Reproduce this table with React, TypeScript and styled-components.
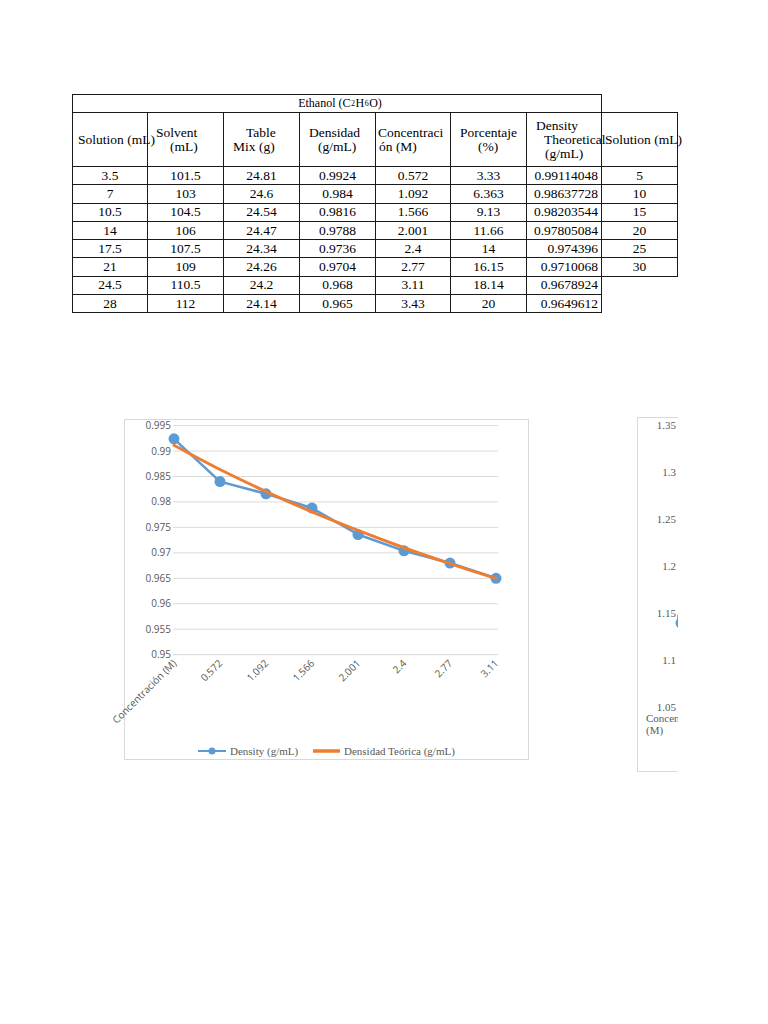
import * as React from 'react';
import styled, { createGlobalStyle } from 'styled-components';

const GlobalStyle = createGlobalStyle`
  body {
    margin: 0;
    background: #fff;
  }
`;

const line = '1px solid #1a1a1a';

const Page = styled.div`
  padding: 94px 0 40px 72px;
  font-family: 'Liberation Serif', 'Times New Roman', serif;
  color: #000;
`;

const Grid = styled.div`
  display: grid;
  grid-template-columns: 76px 76px 76px 76px 75px 76px 75px 76px;
  grid-template-rows: 19px 54px repeat(8, 18.25px);
  font-size: 13.5px;
`;

const Title = styled.div`
  grid-column: 1 / 8;
  grid-row: 1;
  box-sizing: border-box;
  border: ${line};
  display: flex;
  align-items: center;
  justify-content: center;
  font-size: 12px;
  padding-left: 6px;

  sub {
    font-size: 8px;
    vertical-align: -3px;
    line-height: 0;
    margin: 0 0.5px;
  }
`;

const Cell = styled.div<{ $col: number; $row: number; $align?: 'center' | 'right' }>`
  grid-column: ${p => p.$col};
  grid-row: ${p => p.$row};
  box-sizing: border-box;
  border-right: ${line};
  border-bottom: ${line};
  border-left: ${p => (p.$col === 1 ? line : 'none')};
  display: flex;
  align-items: center;
  justify-content: ${p => (p.$align === 'right' ? 'flex-end' : 'center')};
  padding-right: ${p => (p.$align === 'right' ? '3px' : '0')};
  line-height: 1;
  white-space: nowrap;
`;

const Head = styled.div<{ $col: number; $top?: boolean }>`
  grid-column: ${p => p.$col};
  grid-row: 2;
  box-sizing: border-box;
  border-right: ${line};
  border-bottom: ${line};
  border-left: ${p => (p.$col === 1 ? line : 'none')};
  border-top: ${p => (p.$top ? line : 'none')};
  margin-top: ${p => (p.$top ? '-1px' : '0')};
  display: flex;
  flex-direction: column;
  justify-content: center;
  overflow: visible;
  position: relative;
`;

const HeadLine = styled.span<{ $indent: number }>`
  display: block;
  padding-left: ${p => p.$indent}px;
  line-height: 14px;
  white-space: nowrap;
`;

const ChartsRow = styled.div`
  display: flex;
  align-items: flex-start;
  gap: 108px;
  margin-top: 104px;
  padding-left: 52px;
`;

const ChartBox = styled.div`
  width: 405px;
  height: 341px;
  margin-top: 2px;
  box-sizing: border-box;
  border: 1px solid #d9d9d9;
  background: #fff;

  svg {
    display: block;
    overflow: visible;
  }
`;

const Clip = styled.div`
  width: 41px;
  overflow: hidden;
`;

const SidePanel = styled.div`
  width: 200px;
  height: 355px;
  box-sizing: border-box;
  border: 1px solid #d9d9d9;

  svg {
    display: block;
  }
`;

const AxisText = styled.text`
  font-family: 'Open Sans', 'Liberation Sans', sans-serif;
  font-size: 10px;
  fill: #595959;
`;

const SerifText = styled.text`
  font-family: 'Liberation Serif', 'Times New Roman', serif;
  font-size: 11px;
  fill: #595959;
`;

const headers = [
  { col: 1, lines: [['Solution (mL)', 5]] },
  { col: 2, lines: [['Solvent', 8], ['(mL)', 22]] },
  { col: 3, lines: [['Table', 22], ['Mix (g)', 9]] },
  { col: 4, lines: [['Densidad', 9], ['(g/mL)', 18]] },
  { col: 5, lines: [['Concentraci', 2], ['ón (M)', 3]] },
  { col: 6, lines: [['Porcentaje', 9], ['(%)', 27]] },
  { col: 7, lines: [['Density', 9], ['Theoretical', 17], ['(g/mL)', 18]] },
  { col: 8, lines: [['Solution (mL)', 3]], top: true }
] as { col: number; lines: [string, number][]; top?: boolean }[];

const rows = [
  ['3.5', '101.5', '24.81', '0.9924', '0.572', '3.33', '0.99114048', '5'],
  ['7', '103', '24.6', '0.984', '1.092', '6.363', '0.98637728', '10'],
  ['10.5', '104.5', '24.54', '0.9816', '1.566', '9.13', '0.98203544', '15'],
  ['14', '106', '24.47', '0.9788', '2.001', '11.66', '0.97805084', '20'],
  ['17.5', '107.5', '24.34', '0.9736', '2.4', '14', '0.974396', '25'],
  ['21', '109', '24.26', '0.9704', '2.77', '16.15', '0.9710068', '30'],
  ['24.5', '110.5', '24.2', '0.968', '3.11', '18.14', '0.9678924'],
  ['28', '112', '24.14', '0.965', '3.43', '20', '0.9649612']
];

const density = [0.9924, 0.984, 0.9816, 0.9788, 0.9736, 0.9704, 0.968, 0.965];
const theory = [0.99114048, 0.98637728, 0.98203544, 0.97805084, 0.974396, 0.9710068, 0.9678924, 0.9649612];
const categories = ['Concentración (M)', '0.572', '1.092', '1.566', '2.001', '2.4', '2.77', '3.11'];
const ticks = ['0.995', '0.99', '0.985', '0.98', '0.975', '0.97', '0.965', '0.96', '0.955', '0.95'];

const xAt = (i: number) => 49 + i * 46;
const yAt = (v: number) => 5.6 + ((0.995 - v) / 0.005) * 25.45;

function smoothPath(pts: number[][]) {
  let d = `M${pts[0][0]},${pts[0][1]}`;
  for (let i = 0; i < pts.length - 1; i++) {
    const p0 = pts[i - 1] || pts[i];
    const p1 = pts[i];
    const p2 = pts[i + 1];
    const p3 = pts[i + 2] || p2;
    const c1x = p1[0] + (p2[0] - p0[0]) / 6;
    const c1y = p1[1] + (p2[1] - p0[1]) / 6;
    const c2x = p2[0] - (p3[0] - p1[0]) / 6;
    const c2y = p2[1] - (p3[1] - p1[1]) / 6;
    d += ` C${c1x},${c1y} ${c2x},${c2y} ${p2[0]},${p2[1]}`;
  }
  return d;
}

function DensityChart() {
  const bluePts = density.map((v, i) => [xAt(i), yAt(v)]);
  const orangePts = theory.map((v, i) => [xAt(i), yAt(v)]);

  return (
    <ChartBox>
      <svg width="403" height="339">
        {ticks.map((t, i) => {
          const y = 5.6 + i * 25.45;
          return (
            <g key={t}>
              <line x1="48" x2="373" y1={y} y2={y} stroke="#d9d9d9" strokeWidth="1" />
              <AxisText x="46" y={y + 3.5} textAnchor="end">
                {t}
              </AxisText>
            </g>
          );
        })}
        {categories.map((c, i) => (
          <AxisText
            key={c}
            x={xAt(i) + 3}
            y={244}
            textAnchor="end"
            transform={`rotate(-45 ${xAt(i) + 3} 244)`}
          >
            {c}
          </AxisText>
        ))}
        <polyline
          points={bluePts.map(p => p.join(',')).join(' ')}
          fill="none"
          stroke="#5b9bd5"
          strokeWidth="2.5"
          strokeLinejoin="round"
        />
        {bluePts.map((p, i) => (
          <circle key={i} cx={p[0]} cy={p[1]} r="5.5" fill="#5b9bd5" />
        ))}
        <path d={smoothPath(orangePts)} fill="none" stroke="#ed7d31" strokeWidth="3" strokeLinecap="round" />

        <line x1="73" x2="101" y1="331" y2="331" stroke="#5b9bd5" strokeWidth="2" />
        <circle cx="87" cy="331" r="3.5" fill="#5b9bd5" />
        <SerifText x="105" y="335">Density (g/mL)</SerifText>
        <line x1="188" x2="215" y1="331" y2="331" stroke="#ed7d31" strokeWidth="3.5" />
        <SerifText x="219" y="335">Densidad Teórica (g/mL)</SerifText>
      </svg>
    </ChartBox>
  );
}

const sideTicks = ['1.35', '1.3', '1.25', '1.2', '1.15', '1.1', '1.05'];

function SideChart() {
  return (
    <Clip>
      <SidePanel>
        <svg width="198" height="353">
          {sideTicks.map((t, i) => (
            <SerifText key={t} x="38" y={7.7 + i * 46.9 + 3.5} textAnchor="end">
              {t}
            </SerifText>
          ))}
          <SerifText x="8" y="304">Concen</SerifText>
          <SerifText x="8" y="316">(M)</SerifText>
          <circle cx="43" cy="199" r="4" fill="#ed7d31" />
          <circle cx="43" cy="205" r="5.5" fill="#5b9bd5" />
        </svg>
      </SidePanel>
    </Clip>
  );
}

export default function App() {
  return (
    <Page>
      <GlobalStyle />
      <Grid>
        <Title>
          Ethanol (C<sub>2</sub>H<sub>6</sub>O)
        </Title>
        {headers.map(h => (
          <Head key={h.col} $col={h.col} $top={h.top}>
            {h.lines.map(([text, indent]) => (
              <HeadLine key={text} $indent={indent}>
                {text}
              </HeadLine>
            ))}
          </Head>
        ))}
        {rows.map((r, ri) =>
          r.map((v, ci) => (
            <Cell key={`${ri}-${ci}`} $col={ci + 1} $row={ri + 3} $align={ci === 6 ? 'right' : 'center'}>
              {v}
            </Cell>
          ))
        )}
      </Grid>
      <ChartsRow>
        <DensityChart />
        <SideChart />
      </ChartsRow>
    </Page>
  );
}
